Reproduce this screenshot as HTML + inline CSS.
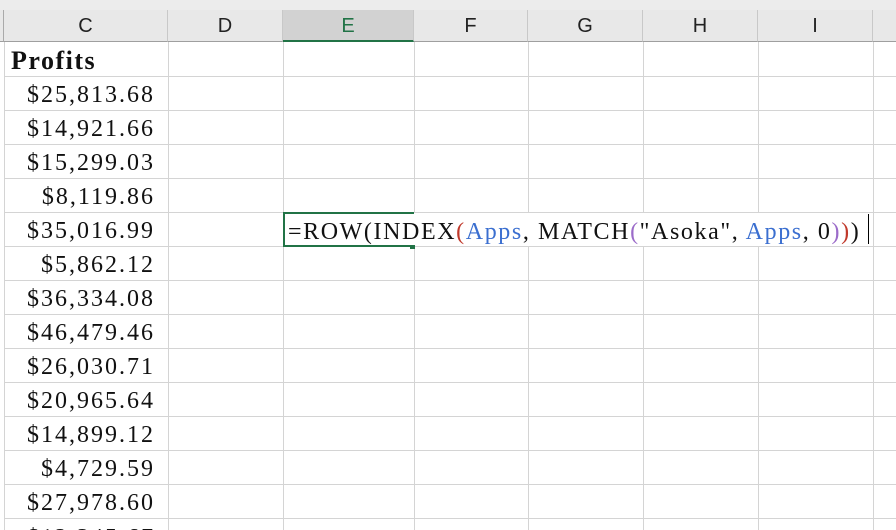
<!DOCTYPE html><html><head><style>
html,body{margin:0;width:896px;height:530px;overflow:hidden}
body{background:#fff;position:relative;font-family:"Liberation Serif",serif}
.top{position:absolute;left:0;top:0;width:896px;height:10px;background:#ececec}
.hdr{position:absolute;top:10px;height:32px;background:#e8e8e8;border-bottom:1px solid #9f9f9f;border-right:1px solid #c8c8c8;box-sizing:border-box;font:20px "Liberation Sans",sans-serif;color:#222;text-align:center;line-height:32px}
.vl{position:absolute;top:42px;height:488px;width:1px;background:#d4d4d4}
.hl{position:absolute;left:4px;right:0;height:1px;background:#d4d4d4}
.c{position:absolute;left:4px;width:151px;text-align:right;font-size:24px;letter-spacing:2px;height:34px;line-height:38px;color:#111;overflow:hidden}
</style></head><body>
<div class="top"></div>
<div class="hdr" style="left:0;width:4px;border-right:1px solid #aaa"></div>
<div class="hdr" style="left:4px;width:164px">C</div>
<div class="hdr" style="left:168px;width:115px">D</div>
<div class="hdr" style="left:283px;width:131px;background:#d2d2d2;border-bottom:2px solid #217346;color:#217346">E</div>
<div class="hdr" style="left:414px;width:114px">F</div>
<div class="hdr" style="left:528px;width:115px">G</div>
<div class="hdr" style="left:643px;width:115px">H</div>
<div class="hdr" style="left:758px;width:115px">I</div>
<div class="hdr" style="left:873px;width:30px"></div>
<div class="vl" style="left:4px"></div><div class="vl" style="left:168px"></div><div class="vl" style="left:283px"></div><div class="vl" style="left:414px"></div><div class="vl" style="left:528px"></div><div class="vl" style="left:643px"></div><div class="vl" style="left:758px"></div><div class="vl" style="left:873px"></div>
<div class="hl" style="top:76px"></div><div class="hl" style="top:110px"></div><div class="hl" style="top:144px"></div><div class="hl" style="top:178px"></div><div class="hl" style="top:212px"></div><div class="hl" style="top:246px"></div><div class="hl" style="top:280px"></div><div class="hl" style="top:314px"></div><div class="hl" style="top:348px"></div><div class="hl" style="top:382px"></div><div class="hl" style="top:416px"></div><div class="hl" style="top:450px"></div><div class="hl" style="top:484px"></div><div class="hl" style="top:518px"></div>
<div class="c" style="top:42px;text-align:left;left:11px;font-weight:bold;font-size:26px;letter-spacing:1.5px">Profits</div>
<div class="c" style="top:76px">$25,813.68</div>
<div class="c" style="top:110px">$14,921.66</div>
<div class="c" style="top:144px">$15,299.03</div>
<div class="c" style="top:178px">$8,119.86</div>
<div class="c" style="top:212px">$35,016.99</div>
<div class="c" style="top:246px">$5,862.12</div>
<div class="c" style="top:280px">$36,334.08</div>
<div class="c" style="top:314px">$46,479.46</div>
<div class="c" style="top:348px">$26,030.71</div>
<div class="c" style="top:382px">$20,965.64</div>
<div class="c" style="top:416px">$14,899.12</div>
<div class="c" style="top:450px">$4,729.59</div>
<div class="c" style="top:484px">$27,978.60</div>
<div class="c" style="top:519px;height:11px">$12,345.67</div>
<div style="position:absolute;left:284px;top:213px;width:585px;height:33px;background:#fff"></div>
<div style="position:absolute;left:283px;top:212px;width:131px;height:35px;border:2px solid #217346;border-right:none;box-sizing:border-box"></div>
<div style="position:absolute;left:410px;top:245px;width:5px;height:4px;background:#217346"></div>
<div style="position:absolute;left:288px;top:212px;height:35px;line-height:40px;font-size:24px;letter-spacing:1.6px;white-space:nowrap;color:#111">=ROW(INDEX<span style="color:#c0392b">(</span><span style="color:#3b6fd0">Apps</span>, MATCH<span style="color:#9b6bc9">(</span>"Asoka", <span style="color:#3b6fd0">Apps</span>, 0<span style="color:#9b6bc9">)</span><span style="color:#c0392b">)</span>)</div>
<div style="position:absolute;left:868px;top:214px;width:1px;height:30px;background:#000"></div>
</body></html>
